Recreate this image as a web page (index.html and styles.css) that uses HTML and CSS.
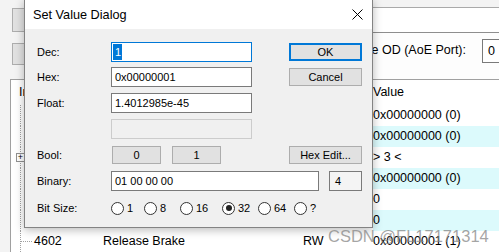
FILE: index.html
```
<!DOCTYPE html>
<html>
<head>
<meta charset="utf-8">
<link rel="stylesheet" href="styles.css">
</head>
<body>
<div class="app">
  <div class="top">
    <div class="leftcol">
      <button class="wbtn b1"></button>
      <button class="wbtn b2"></button>
    </div>
    <div class="rightcol">
      <div class="strip"></div>
      <div class="odrow"><span class="odlabel">Module OD (AoE Port):</span><span class="odfield">0</span></div>
    </div>
  </div>
  <div class="list">
    <div class="lrow lhead">
      <span class="hidx">Index</span><span class="hname"></span><span class="hflag"></span><span class="hval">Value</span>
    </div>
    <div class="lrow">
      <span class="cidx"><span class="tree"></span></span><span class="cname"></span><span class="cflag"></span><span class="cval">0x00000000 (0)</span>
    </div>
    <div class="lrow">
      <span class="cidx"><span class="tree"></span></span><span class="cname"></span><span class="cflag"></span><span class="cval alt">0x00000000 (0)</span>
    </div>
    <div class="lrow">
      <span class="cidx"><span class="tree plus"><span class="pbox">+</span></span></span><span class="cname"></span><span class="cflag"></span><span class="cval">&gt; 3 &lt;</span>
    </div>
    <div class="lrow">
      <span class="cidx"><span class="tree"></span></span><span class="cname"></span><span class="cflag"></span><span class="cval alt">0x00000000 (0)</span>
    </div>
    <div class="lrow">
      <span class="cidx"><span class="tree"></span></span><span class="cname"></span><span class="cflag"></span><span class="cval">0</span>
    </div>
    <div class="lrow">
      <span class="cidx"><span class="tree"></span></span><span class="cname"></span><span class="cflag"></span><span class="cval alt">0</span>
    </div>
    <div class="lrow">
      <span class="cidx"><span class="tree"><span class="branch"></span></span>4602</span><span class="cname">Release Brake</span><span class="cflag">RW</span><span class="cval">0x00000001 (1)</span>
    </div>
  </div>

  <div class="dialog">
    <div class="titlebar">
      <span class="title">Set Value Dialog</span>
      <svg class="close" width="11" height="11" viewBox="0 0 11 11"><path d="M0.5 0.5 L10.5 10.5 M10.5 0.5 L0.5 10.5" stroke="#000" stroke-width="1" fill="none"/></svg>
    </div>
    <div class="dbody">
      <span class="lbl r1">Dec:</span>
      <span class="field focus r1"><span class="sel">1</span></span>
      <button class="btn def r1">OK</button>

      <span class="lbl r2">Hex:</span>
      <span class="field r2">0x00000001</span>
      <button class="btn r2">Cancel</button>

      <span class="lbl r3">Float:</span>
      <span class="field r3">1.4012985e-45</span>

      <span class="field disabled r4"></span>

      <span class="lbl r5">Bool:</span>
      <span class="boolbtns r5"><button class="btn bb">0</button><button class="btn bb">1</button></span>
      <button class="btn hexedit r5">Hex Edit...</button>

      <span class="lbl r6">Binary:</span>
      <span class="binrow r6"><span class="field bin">01 00 00 00</span><span class="field size">4</span></span>

      <span class="lbl r7">Bit Size:</span>
      <span class="radios r7">
        <span class="radio w1"><span class="dot"></span>1</span>
        <span class="radio w8"><span class="dot"></span>8</span>
        <span class="radio w16"><span class="dot"></span>16</span>
        <span class="radio w32"><span class="dot on"><span class="pip"></span></span>32</span>
        <span class="radio w64"><span class="dot"></span>64</span>
        <span class="radio"><span class="dot"></span>?</span>
      </span>
    </div>
  </div>

  <div class="watermark">CSDN @FL17171314</div>
</div>
</body>
</html>
```
FILE: styles.css
```
html, body {
  margin: 0;
  padding: 0;
  overflow: hidden;
  background: #f3f3f3;
}
.app {
  position: relative;
  width: 499px;
  height: 252px;
  overflow: hidden;
  background: #f3f3f3;
  font-family: "Liberation Sans", Arial, sans-serif;
  font-size: 12.5px;
  color: #000;
}
.top {
  display: flex;
  height: 79px;
}
.leftcol {
  width: 110px;
  display: flex;
  flex-direction: column;
}
.wbtn {
  margin: 0 0 0 12px;
  width: 98px;
  padding: 0;
  background: #e1e1e1;
  border: 1px solid #adadad;
  font: inherit;
  color: #000;
  box-sizing: border-box;
}
.b1 { margin-top: 8px; height: 24px; }
.b2 { margin-top: 11px; height: 22px; }
.rightcol {
  flex: 1;
  margin-left: 10px;
  display: flex;
  flex-direction: column;
}
.strip {
  margin-top: 7px;
  height: 26px;
  box-sizing: border-box;
  background: #fff;
  border-top: 1px solid #a9a9a9;
  border-bottom: 1px solid #8e8e8e;
}
.odrow {
  flex: 1;
  background: #fdfdfd;
  display: flex;
  justify-content: flex-end;
  align-items: flex-start;
}
.odlabel {
  margin-top: 6px;
  line-height: 22px;
}
.odfield {
  margin-top: 6px;
  margin-left: 16px;
  width: 17px;
  flex-shrink: 0;
  height: 24px;
  box-sizing: border-box;
  border: 1px solid #7a7a7a;
  border-right: none;
  background: #fff;
  padding-left: 5px;
  line-height: 22px;
}
.list {
  margin-left: 10px;
  height: 173px;
  border-top: 1px solid #a0a0a0;
  border-left: 1px solid #a0a0a0;
  background: #fff;
}
.lrow {
  display: grid;
  grid-template-columns: 92px 200px 70px 1fr;
  height: 21px;
  line-height: 21px;
}
.lhead {
  height: 25px;
  line-height: 25px;
}
.hidx { padding-left: 8px; }
.cidx {
  display: flex;
  align-items: center;
}
.tree {
  margin-left: 9px;
  margin-right: 2px;
  width: 11px;
  height: 21px;
  border-left: 1px dotted #a0a0a0;
  display: flex;
  align-items: center;
}
.branch {
  width: 11px;
  height: 0;
  border-top: 1px dotted #a0a0a0;
}
.pbox {
  margin-left: -5px;
  width: 9px;
  height: 9px;
  box-sizing: border-box;
  border: 1px solid #919191;
  background: #fff;
  font-size: 9px;
  line-height: 6px;
  text-align: center;
  color: #000;
}
.cval { white-space: nowrap; }
.cval.alt { background: #dcfafc; }

/* dialog */
.dialog {
  position: absolute;
  left: 24px;
  top: -1px;
  width: 349px;
  height: 229px;
  box-sizing: border-box;
  border: 1px solid #838383;
  background: #f0f0f0;
  box-shadow: 0 2px 9px rgba(0, 0, 0, 0.28);
  font-size: 11px;
}
.titlebar {
  height: 29px;
  background: #fff;
  display: flex;
  align-items: center;
  justify-content: space-between;
  padding: 0 9px 0 8px;
}
.title {
  font-size: 12.7px;
}
.dbody {
  display: grid;
  grid-template-columns: 74px 141px 37px 73px;
  grid-template-rows: 25px 26px 26px 27px 25px 30px 14px;
  align-items: start;
  padding: 13px 0 0 12px;
}
.r1 { grid-row: 1; }
.r2 { grid-row: 2; }
.r3 { grid-row: 3; }
.r4 { grid-row: 4; grid-column: 2; }
.r5 { grid-row: 5; }
.r6 { grid-row: 6; }
.r7 { grid-row: 7; }
.lbl {
  grid-column: 1;
  height: 20px;
  line-height: 20px;
}
.lbl.r5 { height: 18px; line-height: 18px; }
.lbl.r7 { height: 14px; line-height: 14px; }
.field {
  grid-column: 2;
  height: 20px;
  box-sizing: border-box;
  border: 1px solid #7a7a7a;
  background: #fff;
  padding-left: 3px;
  line-height: 18px;
  white-space: nowrap;
}
.field.focus {
  border-color: #0078d7;
  padding-left: 1px;
}
.sel {
  display: inline-block;
  height: 16px;
  line-height: 16px;
  margin-top: 1px;
  padding: 0 1px 0 2px;
  background: #0078d7;
  color: #fff;
  vertical-align: top;
}
.field.disabled {
  background: #f0f0f0;
  border-color: #cccccc;
}
.btn {
  height: 18px;
  box-sizing: border-box;
  border: 1px solid #adadad;
  background: #e1e1e1;
  font: inherit;
  color: #000;
  padding: 0;
  line-height: 16px;
  text-align: center;
}
.r1.btn, .r2.btn {
  grid-column: 4;
  margin-top: 1px;
}
.btn.def {
  border-color: #0078d7;
  box-shadow: inset 0 0 0 1px #0078d7;
}
.hexedit { grid-column: 4; }
.boolbtns {
  grid-column: 2;
  display: flex;
  gap: 11px;
  padding-left: 1px;
}
.bb { width: 49px; }
.binrow {
  grid-column: 2 / 5;
  display: flex;
}
.field.bin { width: 209px; }
.field.size {
  width: 33px;
  margin-left: 10px;
  background: #f4f4f4;
  padding-left: 5px;
}
.radios {
  grid-column: 2 / 5;
  display: flex;
  height: 14px;
  align-items: center;
}
.radio {
  display: flex;
  align-items: center;
  gap: 3px;
}
.w1 { width: 33px; }
.w8 { width: 36px; }
.w16 { width: 42px; }
.w32 { width: 36px; }
.w64 { width: 36px; }
.dot {
  width: 13px;
  height: 13px;
  box-sizing: border-box;
  border: 1px solid #333;
  border-radius: 50%;
  background: #fff;
  display: flex;
  align-items: center;
  justify-content: center;
}
.pip {
  width: 6px;
  height: 6px;
  border-radius: 50%;
  background: #222;
}
.watermark {
  position: absolute;
  left: 328px;
  top: 227px;
  font-size: 16.5px;
  color: rgba(135, 135, 135, 0.75);
  white-space: nowrap;
}
```
